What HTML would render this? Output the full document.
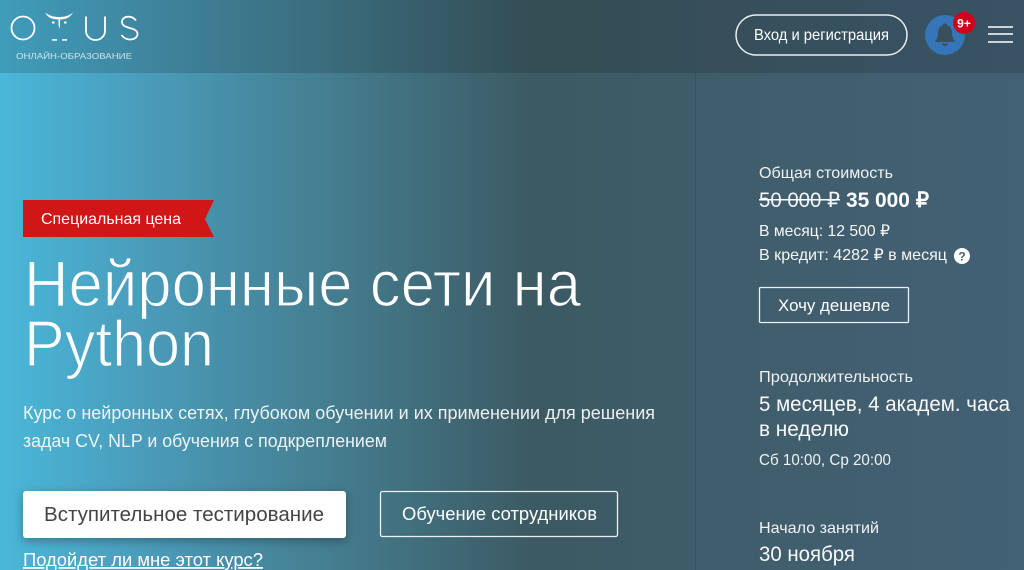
<!DOCTYPE html>
<html lang="ru">
<head>
<meta charset="utf-8">
<title>Нейронные сети на Python</title>
<style>
html,body{margin:0;padding:0;width:1024px;height:570px;overflow:hidden;background:#3c5a63}
svg{display:block;position:absolute;left:0;top:0}
text{font-family:"Liberation Sans",sans-serif;fill:#fff}
</style>
</head>
<body>
<svg width="1024" height="570" viewBox="0 0 1024 570" xmlns="http://www.w3.org/2000/svg">
<defs>
<linearGradient id="bg" x1="0" y1="0" x2="1024" y2="0" gradientUnits="userSpaceOnUse">
<stop offset="0" stop-color="#4ab7d9"/>
<stop offset="0.12" stop-color="#4aa0bf"/>
<stop offset="0.33" stop-color="#447c8e"/>
<stop offset="0.52" stop-color="#3c5a63"/>
<stop offset="1" stop-color="#436175"/>
</linearGradient>
<filter id="sh" x="-10%" y="-30%" width="120%" height="170%"><feDropShadow dx="0" dy="3" stdDeviation="5" flood-color="#000" flood-opacity=".3"/></filter>
</defs>
<rect width="1024" height="570" fill="url(#bg)"/>
<rect width="1024" height="73" fill="#000" opacity=".14"/>
<rect x="695" y="73" width="1" height="497" fill="#000" opacity=".1"/>

<!-- logo -->
<g fill="none" stroke="#fff" stroke-width="1.8">
<ellipse cx="23" cy="28" rx="11.5" ry="11.5"/>
<path d="M86 16.500V31a9.500 9 0 0 0 19 0V16.500"/>
<path d="M136 20.500c-2-2.500-4.500-3.800-7.500-3.800-4 0-6.500 2.300-6.500 5.300 0 7.500 15.500 4.500 15.500 12 0 3.500-3.500 5.500-7.500 5.500-3.500 0-6.500-1.800-8.500-4.500"/>
</g>
<path d="M45 12.500C50 16 54 17 59 17 64 17 69 16 73 12.500 70 18 65 19.500 60 19.500V29L58.500 25V19.500C53 19.500 48 18 45 12.500z" fill="#fff"/>
<g fill="#fff"><rect x="52" y="21.500" width="2.500" height="2"/><rect x="64" y="21.500" width="2.500" height="2"/><rect x="52" y="39" width="5" height="1.800" opacity=".85"/><rect x="62" y="39" width="5" height="1.800" opacity=".85"/></g>
<text x="16" y="59" font-size="8.500" opacity=".75" textLength="116" lengthAdjust="spacingAndGlyphs">ОНЛАЙН-ОБРАЗОВАНИЕ</text>

<!-- header right -->
<rect x="736" y="15" width="171" height="40" rx="20" fill="none" stroke="#fff" stroke-width="1.500" opacity=".9"/>
<text x="754" y="40" font-size="16" textLength="135" lengthAdjust="spacingAndGlyphs">Вход и регистрация</text>
<circle cx="945" cy="35" r="20" fill="#3476b8"/>
<path d="M945 23.500c1.200 0 2 .8 2 1.800 3.500 1 5 4 5 7.500 0 4 1 6 2.500 7.700v1.500h-19v-1.500c1.500-1.700 2.500-3.700 2.500-7.700 0-3.500 1.500-6.500 5-7.500 0-1 .8-1.800 2-1.800z" fill="#37505c"/>
<path d="M942 43.500h6a3 2.500 0 0 1-6 0z" fill="#37505c"/>
<circle cx="964" cy="23" r="11" fill="#d0021b"/>
<text x="964" y="27.500" font-size="12" font-weight="bold" text-anchor="middle">9+</text>
<g fill="#fff" opacity=".75"><rect x="988" y="26" width="25" height="2"/><rect x="988" y="33" width="25" height="2"/><rect x="988" y="41" width="25" height="2"/></g>

<!-- ribbon -->
<path d="M23 200H214L205 219 214 237H23z" fill="#d01616"/>
<text x="41" y="224" font-size="16" textLength="140" lengthAdjust="spacingAndGlyphs">Специальная цена</text>

<!-- title -->
<text x="24" y="306" font-size="65" stroke="url(#bg)" stroke-width="1.300" textLength="557" lengthAdjust="spacingAndGlyphs">Нейронные сети на</text>
<text x="24" y="366" font-size="65" stroke="url(#bg)" stroke-width="1.300" textLength="190" lengthAdjust="spacingAndGlyphs">Python</text>

<!-- description -->
<text x="23" y="419" font-size="18.500" opacity=".9" textLength="632" lengthAdjust="spacingAndGlyphs">Курс о нейронных сетях, глубоком обучении и их применении для решения</text>
<text x="23" y="447" font-size="18.500" opacity=".9" textLength="364" lengthAdjust="spacingAndGlyphs">задач CV, NLP и обучения с подкреплением</text>

<!-- buttons -->
<rect x="23" y="491" width="323" height="47" rx="3" fill="#fff" filter="url(#sh)"/>
<text x="44" y="521" font-size="20" style="fill:#444" textLength="280" lengthAdjust="spacingAndGlyphs">Вступительное тестирование</text>
<rect x="380.500" y="491.500" width="237" height="45" rx="2" fill="none" stroke="#fff" stroke-width="1.300" opacity=".9"/>
<text x="402" y="520" font-size="18" textLength="195" lengthAdjust="spacingAndGlyphs">Обучение сотрудников</text>
<text x="23" y="566" font-size="18" text-decoration="underline" textLength="240" lengthAdjust="spacingAndGlyphs">Подойдет ли мне этот курс?</text>

<!-- price column -->
<text x="759" y="178" font-size="16" opacity=".92" textLength="134" lengthAdjust="spacingAndGlyphs">Общая стоимость</text>
<text x="759" y="207" font-size="21" opacity=".95" textLength="81" lengthAdjust="spacingAndGlyphs">50 000 ₽</text>
<rect x="759" y="199" width="81" height="1.500" fill="#fff"/>
<text x="846" y="207" font-size="21" font-weight="bold" textLength="83" lengthAdjust="spacingAndGlyphs">35 000 ₽</text>
<text x="759" y="236" font-size="16" opacity=".95" textLength="131" lengthAdjust="spacingAndGlyphs">В месяц: 12 500 ₽</text>
<text x="759" y="260" font-size="16" opacity=".95" textLength="188" lengthAdjust="spacingAndGlyphs">В кредит: 4282 ₽ в месяц</text>
<circle cx="962" cy="256" r="8" fill="#fff"/>
<text x="962" y="260.500" font-size="12" font-weight="bold" text-anchor="middle" style="fill:#436175">?</text>
<rect x="759.500" y="287.500" width="149" height="35" rx="1" fill="none" stroke="#fff" stroke-width="1.300" opacity=".9"/>
<text x="778" y="311" font-size="17" textLength="112" lengthAdjust="spacingAndGlyphs">Хочу дешевле</text>

<text x="759" y="382" font-size="16" opacity=".92" textLength="154" lengthAdjust="spacingAndGlyphs">Продолжительность</text>
<text x="759" y="411" font-size="21" opacity=".97" textLength="251" lengthAdjust="spacingAndGlyphs">5 месяцев, 4 академ. часа</text>
<text x="759" y="436" font-size="21" opacity=".97" textLength="90" lengthAdjust="spacingAndGlyphs">в неделю</text>
<text x="759" y="465" font-size="16" opacity=".92" textLength="132" lengthAdjust="spacingAndGlyphs">Сб 10:00, Ср 20:00</text>

<text x="759" y="533" font-size="16" opacity=".92" textLength="120" lengthAdjust="spacingAndGlyphs">Начало занятий</text>
<text x="759" y="561" font-size="21" opacity=".97" textLength="96" lengthAdjust="spacingAndGlyphs">30 ноября</text>
</svg>
</body>
</html>
